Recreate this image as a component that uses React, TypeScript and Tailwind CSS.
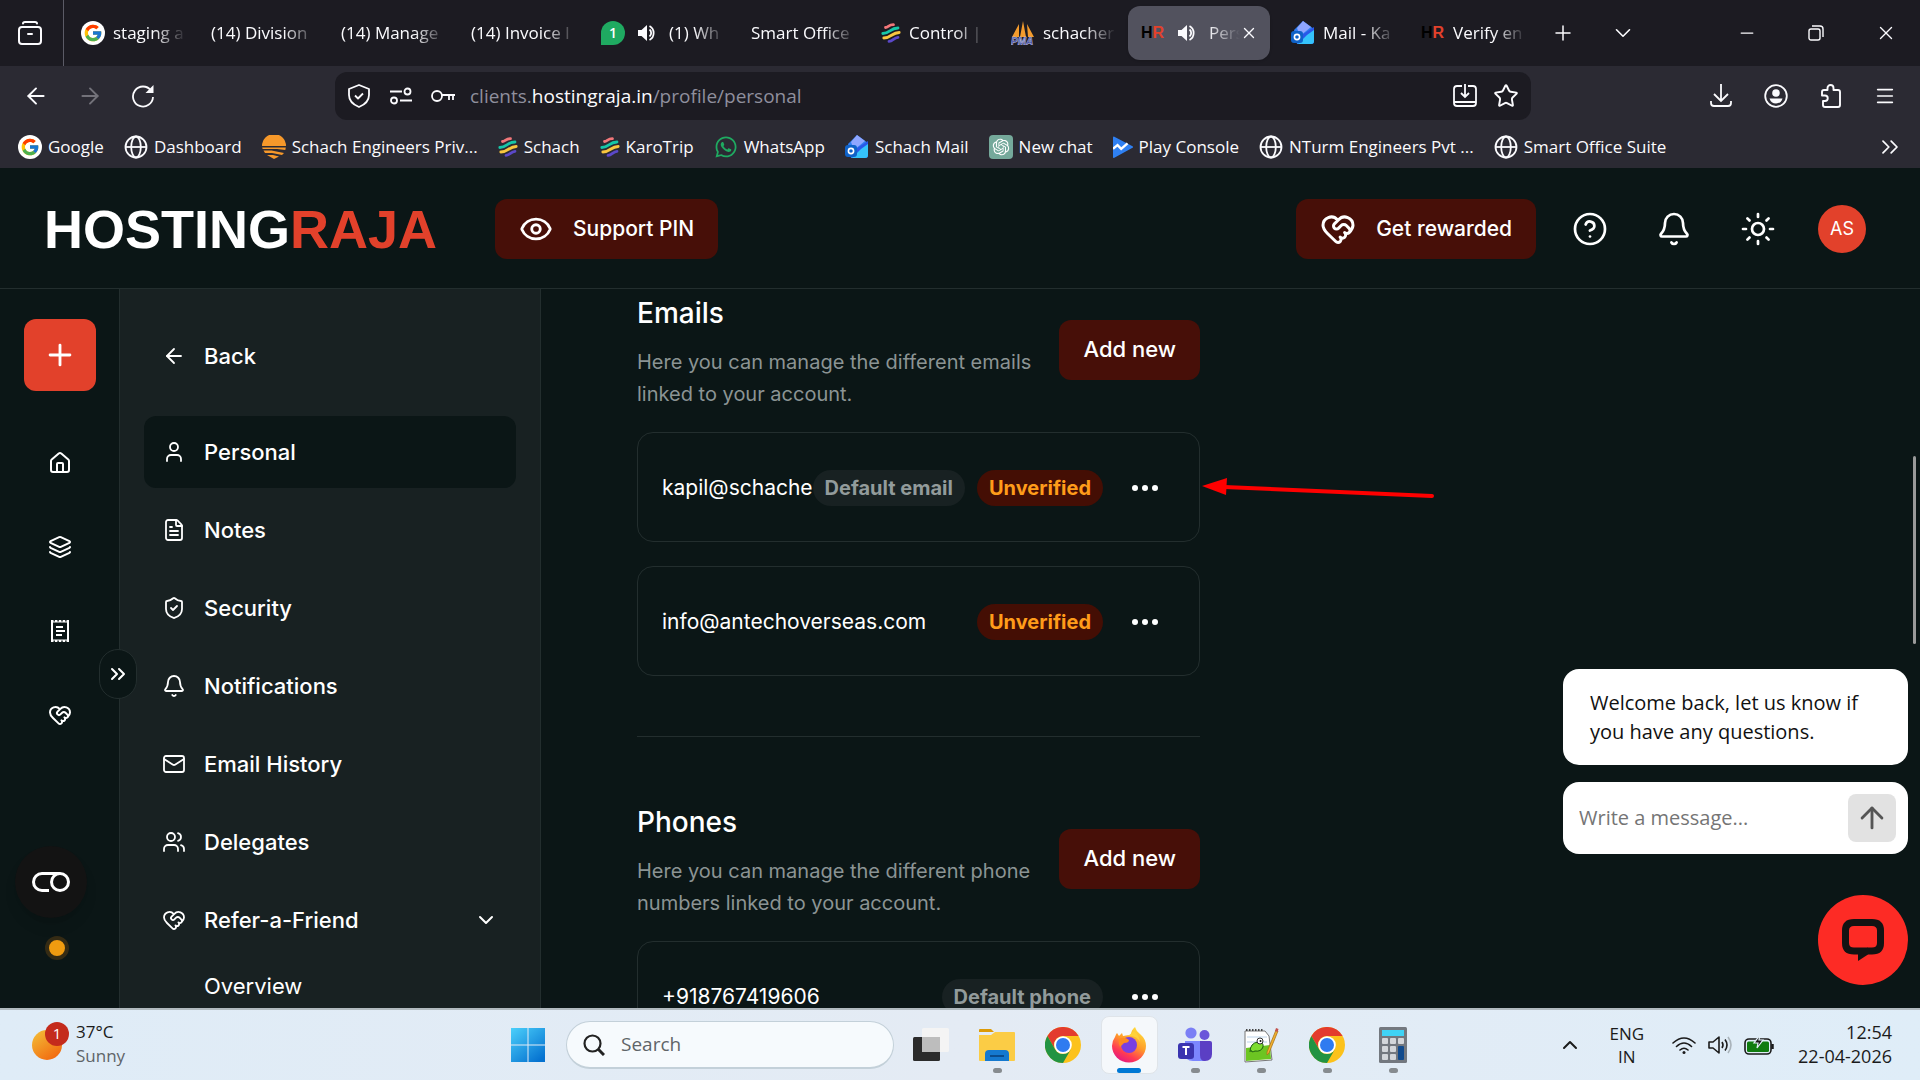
import type { ReactNode } from "react";
import {
  ArrowLeft, ArrowRight, ArrowUp, Bell, ChevronDown, ChevronsRight, ChevronUp, CircleQuestionMark, Eye,
  FileText, HeartHandshake, House, Layers, Mail, Menu, Minus, Plus, ShieldCheck, Star, Sun, User, Users, X,
} from "lucide-react";
import { FcGoogle } from "react-icons/fc";
import { FaWhatsapp } from "react-icons/fa";
import { RiOpenaiFill } from "react-icons/ri";

const GoogleIcon = () => (
  <span className="flex size-6 shrink-0 items-center justify-center rounded-full bg-white"><FcGoogle size={20} /></span>
);

const GlobeIcon = () => (
  <svg viewBox="0 0 24 24" className="size-6 shrink-0" fill="none" stroke="#fbfbfe" strokeWidth="1.8">
    <circle cx="12" cy="12" r="10.5" />
    <ellipse cx="12" cy="12" rx="4.8" ry="10.5" />
    <path d="M1.5 12h21" />
  </svg>
);

const WaveIcon = () => (
  <svg viewBox="0 0 20 20" className="size-5 shrink-0" fill="none" strokeWidth="2.8" strokeLinecap="round">
    <path d="M4.500 4.500C7 4.500 8 1.500 12.500 1.700" stroke="#f2777a" />
    <path d="M1.800 10.500C9 10.500 9 5 17 5" stroke="#16c7a8" />
    <path d="M2.800 15C10 15 11 9.500 18.200 9.500" stroke="#f9c73f" />
    <path d="M8 18.300C12 18 13 14.500 17 14.300" stroke="#5b48c9" />
  </svg>
);

const SunsetIcon = () => (
  <svg viewBox="0 0 24 24" className="size-6 shrink-0" fill="#f6982a">
    <path d="M0 11A12 12 0 0 1 24 11z" />
    <path d="M.2 12.500h23.600l-.5 2.500-8.300-1-14.400 0z" />
    <path d="M1.500 15.500h8l12.500 2.500-2 2-10-2-7 0zM5 20h6l6 1.500-5 2.500z" />
  </svg>
);

const OutlookIcon = () => (
  <svg viewBox="0 0 24 24" className="size-6 shrink-0">
    <path d="M3 9L12 0l11 8v12a3 3 0 0 1-3 3H6z" fill="#2f7df0" />
    <path d="M6 7L12 0l8 6L9 15z" fill="#8fa6ff" />
    <path d="M9 15L23 6v14a3 3 0 0 1-3 3H8z" fill="#2a57e8" />
    <path d="M23 9v11a3 3 0 0 1-3 3H7l9-9z" fill="#35c3fb" />
    <rect x="0" y="10" width="12" height="12" rx="3" fill="#0f62c8" />
    <circle cx="6" cy="16" r="2.600" fill="none" stroke="#fff" strokeWidth="1.600" />
  </svg>
);

const ChatGptIcon = () => (
  <span className="flex size-6 shrink-0 items-center justify-center rounded bg-[#75a99b]"><RiOpenaiFill size={20} color="#fff" /></span>
);

const PlayConsoleIcon = () => (
  <svg viewBox="0 0 22 24" className="h-6 w-5 shrink-0">
    <path d="M1 1.500L21 12 1 23z" fill="#2f80f2" stroke="#2f80f2" strokeWidth="2" strokeLinejoin="round" />
    <path d="M0 14l5-4 4 4 7-6" fill="none" stroke="#fff" strokeWidth="2.600" />
  </svg>
);

const PmaIcon = () => (
  <svg viewBox="0 0 24 24" className="size-6 shrink-0">
    <path d="M8 3v13H1zM12 0l3 16H9zM16 3l7 13h-6z" fill="#f39b2d" />
    <text x="0" y="24" fontSize="10" fontWeight="700" fontStyle="italic" fill="#33409a" stroke="#c9cdf0" strokeWidth="0.500" fontFamily="Liberation Sans, sans-serif">PMA</text>
  </svg>
);

const HrIcon = () => (
  <span className="w-6 shrink-0 font-['Liberation_Sans',sans-serif] text-base leading-6 font-bold text-black">H<span className="text-[#e2412b]">R</span></span>
);

const WhatsAppBadge = () => (
  <span className="flex size-6 shrink-0 items-center justify-center rounded-full rounded-bl-none bg-[#1faa61] text-sm font-semibold text-white">1</span>
);

const SpeakerIcon = () => (
  <svg viewBox="0 0 20 20" className="size-5 shrink-0" fill="#fbfbfe">
    <path d="M1 7h3.500L10 2v16l-5.500-5H1z" />
    <path d="M12.500 6.500a4.500 4.500 0 0 1 0 7M12.500 3a8 8 0 0 1 0 14" fill="none" stroke="#fbfbfe" strokeWidth="1.800" />
  </svg>
);

const TabsArchiveIcon = () => (
  <svg viewBox="0 0 24 24" className="size-6" fill="none" stroke="#fbfbfe" strokeWidth="2" strokeLinecap="round">
    <path d="M5 2.500Q5 1 7 1h10q2 0 2 1.500" />
    <rect x="1" y="6" width="22" height="17" rx="3" />
    <path d="M10 13h4" />
  </svg>
);

type Tab = { title: string; icon?: ReactNode; sound?: boolean; active?: boolean };

const tabs: Tab[] = [
  { title: "staging a", icon: <GoogleIcon /> },
  { title: "(14) Division" },
  { title: "(14) Manage" },
  { title: "(14) Invoice l" },
  { title: "(1) Wh", icon: <WhatsAppBadge />, sound: true },
  { title: "Smart Office" },
  { title: "Control |", icon: <WaveIcon /> },
  { title: "schacher", icon: <PmaIcon /> },
  { title: "Pers", icon: <HrIcon />, sound: true, active: true },
  { title: "Mail - Ka", icon: <OutlookIcon /> },
  { title: "Verify en", icon: <HrIcon /> },
];

const bookmarks = [
  { title: "Google", icon: <GoogleIcon /> },
  { title: "Dashboard", icon: <GlobeIcon /> },
  { title: "Schach Engineers Priv...", icon: <SunsetIcon /> },
  { title: "Schach", icon: <WaveIcon /> },
  { title: "KaroTrip", icon: <WaveIcon /> },
  { title: "WhatsApp", icon: <FaWhatsapp size={24} color="#1faa61" /> },
  { title: "Schach Mail", icon: <OutlookIcon /> },
  { title: "New chat", icon: <ChatGptIcon /> },
  { title: "Play Console", icon: <PlayConsoleIcon /> },
  { title: "NTurm Engineers Pvt ...", icon: <GlobeIcon /> },
  { title: "Smart Office Suite", icon: <GlobeIcon /> },
];

const menu = [
  { title: "Personal", icon: User, active: true },
  { title: "Notes", icon: FileText },
  { title: "Security", icon: ShieldCheck },
  { title: "Notifications", icon: Bell },
  { title: "Email History", icon: Mail },
  { title: "Delegates", icon: Users },
  { title: "Refer-a-Friend", icon: HeartHandshake, open: true },
];

function TabStrip() {
  return (
    <div className="flex h-[66px] shrink-0 items-center bg-[#1c1b22] text-[17px] text-[#fbfbfe]">
      <button type="button" aria-label="Recent browsing" className="flex h-full w-16 items-center justify-center border-r border-[#5b5b66] pr-1"><TabsArchiveIcon /></button>
      <div className="ml-1 flex h-full items-center">
        {tabs.map((tab) => (
          <div key={tab.title} className={tab.sound ? "w-[150px] shrink-0" : "w-[130px] shrink-0"}>
            <div className={`flex h-[54px] items-center gap-2 pl-[13px] ${tab.active ? "mr-2 rounded-xl bg-[#52525e] pr-3 shadow" : "pr-3"}`}>
              {tab.icon}
              {tab.sound && <span className="mx-1 flex"><SpeakerIcon /></span>}
              <span className="min-w-0 flex-1 overflow-hidden whitespace-nowrap [mask-image:linear-gradient(to_right,#000_calc(100%-32px),transparent)]">{tab.title}</span>
              {tab.active && <button type="button" aria-label="Close tab" className="-ml-2"><X size={18} strokeWidth={1.8} /></button>}
            </div>
          </div>
        ))}
      </div>
      <button type="button" aria-label="New tab" className="ml-3 flex w-[26px] justify-center"><Plus size={24} strokeWidth={1.5} /></button>
      <button type="button" aria-label="List all tabs" className="ml-[34px] flex w-7"><ChevronDown size={26} strokeWidth={1.5} /></button>
      <div className="ml-auto flex items-center pr-[22px]">
        <button type="button" aria-label="Minimize" className="flex w-[69px] justify-center"><Minus size={20} strokeWidth={1.5} /></button>
        <button type="button" aria-label="Restore" className="flex w-[69px] justify-center">
          <svg viewBox="0 0 16 16" className="size-4" fill="none" stroke="#fbfbfe" strokeWidth="1.400">
            <rect x="1" y="4" width="11" height="11" rx="2" />
            <path d="M4 1h8q3 0 3 3v8" />
          </svg>
        </button>
        <button type="button" aria-label="Close" className="ml-6 flex w-6 justify-center"><X size={22} strokeWidth={1.5} /></button>
      </div>
    </div>
  );
}

function AddressBar() {
  return (
    <div className="flex h-15 shrink-0 items-center bg-[#2b2a33] text-[#fbfbfe]">
      <div className="flex w-[335px] items-center gap-7 pl-[23px]">
        <button type="button" aria-label="Go back"><ArrowLeft size={26} strokeWidth={1.8} /></button>
        <button type="button" aria-label="Go forward" className="text-[#73727a]"><ArrowRight size={26} strokeWidth={1.8} /></button>
        <button type="button" aria-label="Reload">
          <svg viewBox="0 0 24 24" className="size-6" fill="none" stroke="currentColor" strokeWidth="1.800">
            <path d="M20 6.500A10 10 0 1 0 22 13" />
            <path d="M22.500 1v8h-8z" fill="currentColor" stroke="none" />
          </svg>
        </button>
      </div>
      <div className="flex h-12 min-w-0 max-w-[1196px] flex-1 items-center rounded-xl bg-[#1c1b22] pr-3 pl-3">
        <svg viewBox="0 0 24 24" className="size-6" fill="none" stroke="currentColor" strokeWidth="1.800" strokeLinejoin="round">
          <path d="M12 1l10 4v6q0 8-10 12Q2 19 2 11V5z" />
          <path d="M8 11.500l3 3 5-5" />
        </svg>
        <svg viewBox="0 0 22 18" className="ml-[19px] h-[18px] w-[22px]" fill="none" stroke="currentColor" strokeWidth="1.800">
          <path d="M0 4.500h12M10 13.500h12" />
          <circle cx="17.500" cy="4.500" r="3" />
          <circle cx="4" cy="13.500" r="3" />
        </svg>
        <svg viewBox="0 0 24 14" className="ml-[19px] h-3.5 w-6" fill="none" stroke="currentColor" strokeWidth="1.800">
          <circle cx="6" cy="7" r="5" />
          <path d="M11 6h13M18 6v5M22 6v5" />
        </svg>
        <div className="ml-[15px] flex-1 text-[19px] text-[#8f8f9d]">clients.<span className="text-[#fbfbfe]">hostingraja.in</span>/profile/personal</div>
        <svg viewBox="0 0 24 24" className="size-6" fill="none" stroke="currentColor" strokeWidth="1.800">
          <path d="M9 2H4q-3 0-3 3v14q0 3 3 3h16q3 0 3-3V5q0-3-3-3h-5M1 18h22M12 0v12M8 9l4 4 4-4" />
        </svg>
        <Star size={26} strokeWidth={1.8} className="ml-4" />
      </div>
      <div className="ml-auto flex items-center gap-[31px] pr-6">
        <svg viewBox="0 0 24 24" className="size-6" fill="none" stroke="currentColor" strokeWidth="1.800">
          <path d="M12 0v17M5 10l7 7 7-7M2 17v2q0 3 3 3h14q3 0 3-3v-2" />
        </svg>
        <svg viewBox="0 0 24 24" className="size-6">
          <circle cx="12" cy="12" r="10.800" fill="none" stroke="currentColor" strokeWidth="1.800" />
          <circle cx="12" cy="9" r="3.800" fill="currentColor" />
          <path d="M5.500 14.500h13q-1.500 5-6.500 5t-6.500-5z" fill="currentColor" />
        </svg>
        <svg viewBox="0 0 24 24" className="size-6" fill="none" stroke="currentColor" strokeWidth="1.900" strokeLinejoin="round">
          <path d="M8.500 6V4a3 3 0 0 1 6 0v2H19q2 0 2 2v13q0 2-2 2H6q-2 0-2-2v-4h2a2.500 2.500 0 0 0 0-5.500H3V8q0-2 2-2z" />
        </svg>
        <Menu size={22} strokeWidth={1.8} />
      </div>
    </div>
  );
}

function BookmarkBar() {
  return (
    <nav className="flex h-[42px] shrink-0 items-center bg-[#2b2a33] pr-4 pl-[18px] text-[17px] text-[#fbfbfe]">
      <div className="flex items-center gap-5">
        {bookmarks.map((item) => (
          <a key={item.title} href="#" className="flex items-center gap-1.5 whitespace-nowrap">{item.icon}{item.title}</a>
        ))}
      </div>
      <ChevronsRight size={28} strokeWidth={1.5} className="ml-auto" />
    </nav>
  );
}

function SiteHeader() {
  return (
    <header className="flex h-[121px] shrink-0 items-center border-b border-[#232e2e] pt-0.5 pr-[54px] pl-11">
      <a href="#" className="w-[451px] font-['Liberation_Sans',sans-serif] text-[54px] leading-none font-bold text-white">HOSTING<span className="text-[#e2412b]">RAJA</span></a>
      <button type="button" className="flex h-15 items-center gap-5 rounded-xl bg-[#470f08] px-6 text-[21px] font-medium text-white"><Eye size={34} />Support PIN</button>
      <button type="button" className="ml-auto flex h-15 items-center gap-5 rounded-xl bg-[#470f08] px-6 text-[21px] font-medium text-white"><HeartHandshake size={36} />Get rewarded</button>
      <button type="button" aria-label="Help" className="ml-9"><CircleQuestionMark size={36} strokeWidth={1.8} /></button>
      <button type="button" aria-label="Alerts" className="ml-12"><Bell size={36} strokeWidth={1.8} /></button>
      <button type="button" aria-label="Theme" className="ml-12"><Sun size={36} strokeWidth={1.8} /></button>
      <button type="button" className="ml-[42px] size-12 rounded-full bg-[#e2412b] text-lg text-white">AS</button>
    </header>
  );
}

function Rail() {
  return (
    <div className="relative flex w-[120px] shrink-0 flex-col items-center border-r border-[#232e2e] pt-[30px]">
      <button type="button" aria-label="Create" className="flex size-[72px] items-center justify-center rounded-xl bg-[#e2412b]"><Plus size={34} strokeWidth={2} /></button>
      <nav className="mt-15 flex flex-col gap-15">
        <a href="#" aria-label="Home"><House size={24} /></a>
        <a href="#" aria-label="Products"><Layers size={24} /></a>
        <a href="#" aria-label="Invoices">
          <svg viewBox="0 0 24 24" className="size-6" fill="none" stroke="currentColor" strokeWidth="2">
            <path d="M4 1v22M20 1v22" />
            <path d="M3 2h18M3 22h18" strokeDasharray="2.500 1.400" />
            <path d="M4 3h16M4 21h16" strokeWidth="1" />
            <path d="M8 8h7M8 12h9M8 16h6" />
          </svg>
        </a>
        <a href="#" aria-label="Rewards"><HeartHandshake size={24} /></a>
      </nav>
      <button type="button" aria-label="Expand menu" className="absolute top-[360px] -right-[18px] z-10 flex h-[50px] w-[38px] items-center justify-center rounded-full border border-[#232e2e] bg-[#0b1616]"><ChevronsRight size={24} /></button>
      <div className="absolute top-[557px] left-[15px] flex size-[72px] items-center justify-center rounded-full bg-[#131313] shadow-lg">
        <svg viewBox="0 0 38 20" className="h-5 w-[38px]" fill="none" stroke="#fff" strokeWidth="3">
          <path d="M17 18.500h-7a8.500 8.500 0 0 1 0-17h18" />
          <circle cx="28" cy="10" r="8.500" />
        </svg>
      </div>
      <div className="absolute top-[647px] left-[45px] size-6 rounded-full border-4 border-[#352b14] bg-[#ef9b10]" />
    </div>
  );
}

function SideMenu() {
  return (
    <aside className="w-[421px] shrink-0 border-r border-[#232e2e] bg-[#182122] px-6 text-[22px] font-medium">
      <a href="#" className="mt-[31px] flex h-[72px] items-center gap-[18px] pl-[18px]"><ArrowLeft size={24} strokeWidth={1.8} />Back</a>
      <nav className="mt-6 flex flex-col gap-1.5">
        {menu.map((item) => (
          <a key={item.title} href="#" className={`flex h-[72px] items-center gap-[18px] rounded-xl px-[18px] ${item.active ? "bg-[#0b1616]" : ""}`}>
            <item.icon size={24} strokeWidth={1.8} />
            {item.title}
            {item.open && <ChevronDown size={24} className="ml-auto" />}
          </a>
        ))}
        <a href="#" className="pl-15 leading-12 font-normal">Overview</a>
      </nav>
    </aside>
  );
}

const Badge = ({ children, warn }: { children: ReactNode; warn?: boolean }) => (
  <span className={`shrink-0 rounded-full px-3 text-xl leading-9 font-bold ${warn ? "bg-[#440e04] text-[#ff9c1a]" : "bg-[#182122] text-[#929b9b]"}`}>{children}</span>
);

function ContactCard({ value, badge, unverified }: { value: string; badge?: string; unverified?: boolean }) {
  return (
    <div className="flex h-[110px] items-center rounded-2xl border border-[#232e2e] px-6 pt-0.5 text-[21px]">
      <span className="min-w-0 flex-1 overflow-hidden whitespace-nowrap">{value}</span>
      <div className="flex gap-3">
        {badge && <Badge>{badge}</Badge>}
        {unverified && <Badge warn>Unverified</Badge>}
      </div>
      <button type="button" aria-label="More" className="ml-3 flex h-15 w-15 items-center justify-center">
        <svg viewBox="0 0 26 8" className="h-2 w-[26px]" fill="#fff"><circle cx="3" cy="4" r="3" /><circle cx="13" cy="4" r="3" /><circle cx="23" cy="4" r="3" /></svg>
      </button>
    </div>
  );
}

function Section({ title, text, children }: { title: string; text: string; children: ReactNode }) {
  return (
    <section>
      <div className="flex items-center justify-between gap-6">
        <div className="min-w-0 flex-1">
          <h2 className="text-[28px] leading-12 font-medium">{title}</h2>
          <p className="mt-[9px] text-xl leading-8 text-[#8b9494]">{text}</p>
        </div>
        <button type="button" className="h-15 shrink-0 rounded-xl bg-[#470f08] px-6 text-[22px] font-medium text-white">Add new</button>
      </div>
      <div className="mt-[22px] flex flex-col gap-6">{children}</div>
    </section>
  );
}

function ChatWidget() {
  return (
    <div className="absolute right-3 bottom-[23px] flex w-[345px] flex-col items-end font-['Open_Sans',sans-serif]">
      <p className="w-full rounded-2xl bg-white px-[27px] py-[19px] text-xl leading-[29px] text-[#111]">Welcome back, let us know if you have any questions.</p>
      <div className="mt-[17px] flex h-[72px] w-full items-center rounded-2xl bg-white pr-3 pl-4">
        <input aria-label="Message" placeholder="Write a message..." className="min-w-0 flex-1 text-xl text-[#111] outline-none placeholder:text-[#757575]" />
        <button type="button" aria-label="Send" className="flex size-12 items-center justify-center rounded-lg bg-[#e2e2e2] text-[#555]"><ArrowUp size={34} strokeWidth={2} /></button>
      </div>
      <button type="button" aria-label="Open chat" className="mt-[41px] flex size-[90px] items-center justify-center rounded-full bg-[#fd2b25]">
        <svg viewBox="0 0 42 42" className="size-[42px]" fill="none" stroke="#131313" strokeWidth="7">
          <path d="M16 32h-4q-8.500 0-8.500-8V11.500q0-8 8.500-8h18q8.500 0 8.500 8V24q0 8-8.500 8h-4.500" />
          <path d="M16 28.500v13.500l10-6.500 0-7z" fill="#131313" stroke="none" />
        </svg>
      </button>
    </div>
  );
}

const ChromeIcon = () => (
  <svg viewBox="0 0 36 36" className="size-9">
    <circle cx="18" cy="18" r="18" fill="#fcc21b" />
    <path d="M2.400 9A18 18 0 0 1 33.600 9H18a9 9 0 0 0-7.800 13.500z" fill="#e33b2e" />
    <path d="M2.400 9A18 18 0 0 0 18 36l7.800-13.500a9 9 0 0 1-15.600 0z" fill="#229342" />
    <circle cx="18" cy="18" r="8.800" fill="#fff" />
    <circle cx="18" cy="18" r="7" fill="#2f7bf0" />
  </svg>
);

const FolderIcon = () => (
  <svg viewBox="0 0 36 36" className="size-9">
    <path d="M0 3q0-1 1-1h11l3 3H0z" fill="#dd9a07" />
    <path d="M0 8h12l4-3h19q1 0 1 1v27q0 1-1 1H1q-1 0-1-1z" fill="#fbcc45" />
    <path d="M6 34V27q0-4 4-4h16q4 0 4 4v7z" fill="#1579cf" />
    <path d="M11 29h14" stroke="#0b4c8c" strokeWidth="2" />
  </svg>
);

const FirefoxIcon = () => (
  <svg viewBox="0 0 36 36" className="size-9">
    <defs>
      <linearGradient id="fox" x1="0.800" y1="0" x2="0.250" y2="1">
        <stop offset="0" stopColor="#ffe43d" /><stop offset="0.450" stopColor="#ff9a2a" />
        <stop offset="0.750" stopColor="#ff3a52" /><stop offset="1" stopColor="#e01587" />
      </linearGradient>
    </defs>
    <path d="M4 10q1-3 2-4l2 3 3-3 1 3q5-1 8-1 0-5 4-8 1 4 5 7 6 5 6 12a17 16.500 0 0 1-34 0q0-5 3-9z" fill="url(#fox)" />
    <circle cx="18" cy="18" r="8" fill="#7a3fe0" />
    <path d="M17 9q9-1 12 6-1-7-6-11" fill="#ffd23a" />
    <path d="M8 12q5-3 10 1 0 3-5 3-2 2-4 4-2-4-1-8z" fill="#ff8a1f" />
  </svg>
);

const TeamsIcon = () => (
  <svg viewBox="0 0 36 36" className="size-9">
    <circle cx="14" cy="6" r="5.600" fill="#7b7ff5" />
    <circle cx="27.500" cy="8" r="5" fill="#6a55d9" />
    <path d="M20 14h13q2 0 2 2v11q0 7-7 7h-8z" fill="#5b3fc4" />
    <path d="M8 14h15v14q0 6 5 6H16q-8 0-8-7z" fill="#7b86ff" />
    <rect x="1" y="16" width="16" height="16" rx="3" fill="#3a34b0" />
    <path d="M5.500 20h7M9 20v8" stroke="#fff" strokeWidth="2" />
  </svg>
);

const NotepadIcon = () => (
  <svg viewBox="0 0 36 36" className="size-9">
    <path d="M2 4h20l4 5 3 24-27 2z" fill="#fff" stroke="#777" strokeWidth="1" />
    <path d="M3 21l24-3 1 14-25 2z" fill="#6cc522" />
    <path d="M3 3h18" stroke="#444" strokeWidth="2" strokeDasharray="1.500 1.500" />
    <path d="M4 10h20M4 15h20" stroke="#bcd3ea" />
    <path d="M7 25q0-9 8-10 6 0 5 5-2 5-8 4-4 2-4-1" fill="#7ddc2e" stroke="#1c5c10" />
    <circle cx="17" cy="14" r="3" fill="#fff" stroke="#333" /><circle cx="17.500" cy="14" r="1" fill="#111" />
    <path d="M33 3l2 1-9 22-2 2 0-3z" fill="#f3b12e" stroke="#a8731a" strokeWidth="0.800" />
    <path d="M33 1l2.500 1-1 3-2.500-1z" fill="#c2524d" />
  </svg>
);

const CalculatorIcon = () => (
  <svg viewBox="0 0 36 36" className="size-9">
    <rect x="4" width="28" height="36" rx="1.500" fill="#73787f" />
    <rect x="7" y="3" width="22" height="6" fill="#3fd3f5" />
    {[11, 19, 27].map((y) => [7, 15, 23].map((x) => (x === 23 && y > 11 ? null : <rect key={`${x}-${y}`} x={x} y={y} width="6" height="6" rx="1" fill="#d3d6da" />)))}
    <rect x="23" y="19" width="6" height="14" rx="1" fill="#114a8c" />
  </svg>
);

const TaskViewIcon = () => (
  <svg viewBox="0 0 36 36" className="size-9">
    <rect x="0" y="10" width="27" height="24" rx="1.500" fill="#2b2b2b" />
    <rect x="9" y="1" width="27" height="24" rx="1.500" fill="#f4f4f4" />
    <path d="M9 10h18v15H9z" fill="#bdbdbd" />
  </svg>
);

const WindowsIcon = () => (
  <svg viewBox="0 0 36 36" className="size-9">
    <defs>
      <linearGradient id="win" x1="0" y1="0" x2="0.800" y2="1"><stop offset="0" stopColor="#4bd0fb" /><stop offset="1" stopColor="#0572d0" /></linearGradient>
    </defs>
    <path d="M1 1h16.500v16.500H1zM18.500 1H35v16.500H18.500zM1 18.500h16.500V35H1zM18.500 18.500H35V35H18.500z" fill="url(#win)" />
  </svg>
);

const apps = [
  { name: "Task View", icon: <TaskViewIcon /> },
  { name: "File Explorer", icon: <FolderIcon />, running: true },
  { name: "Chrome", icon: <ChromeIcon /> },
  { name: "Firefox", icon: <FirefoxIcon />, focused: true },
  { name: "Teams", icon: <TeamsIcon />, running: true },
  { name: "Notepad++", icon: <NotepadIcon />, running: true },
  { name: "Chrome profile", icon: <ChromeIcon />, running: true },
  { name: "Calculator", icon: <CalculatorIcon />, running: true },
];

function Taskbar() {
  return (
    <footer className="relative flex h-[72px] shrink-0 items-center border-t-2 border-[#b1babf] bg-linear-to-r from-[#dfecf7] via-[#e4ebf4] to-[#dfedf8] font-['Open_Sans',sans-serif] text-[17px] text-[#1b1b1b]">
      <button type="button" className="flex w-[510px] items-center gap-1 pb-0.5 pl-8 text-left">
        <svg viewBox="0 0 40 44" className="h-11 w-10">
          <defs><linearGradient id="sun" x1="0" y1="0" x2="0.700" y2="1"><stop offset="0" stopColor="#f3c23a" /><stop offset="1" stopColor="#f26a0f" /></linearGradient></defs>
          <circle cx="15" cy="23" r="15" fill="url(#sun)" />
          <circle cx="25" cy="12" r="12" fill="#c42b1c" />
          <text x="25" y="17" fontSize="15" textAnchor="middle" fill="#fff">1</text>
        </svg>
        <span className="leading-6">37°C<br /><span className="text-[#5e6468]">Sunny</span></span>
      </button>
      <button type="button" aria-label="Start"><WindowsIcon /></button>
      <label className="ml-5 flex h-12 w-[328px] items-center rounded-full border border-b-2 border-[#c3d0d9] bg-[#f6fafd] pl-4">
        <svg viewBox="0 0 22 22" className="size-[22px]" fill="none" stroke="#222" strokeWidth="2.200">
          <circle cx="9.500" cy="9.500" r="8" /><path d="M15.500 15.500l5.500 5.500" strokeWidth="3" />
        </svg>
        <input aria-label="Search" placeholder="Search" className="ml-4 min-w-0 flex-1 text-[19px] outline-none placeholder:text-[#5f6468]" />
      </label>
      <div className="ml-1 flex h-full items-center">
        {apps.map((app) => (
          <button key={app.name} type="button" aria-label={app.name} className="relative flex h-full w-[66px] items-center justify-center">
            <span className={`flex h-[58px] w-[57px] items-center justify-center rounded-lg ${app.focused ? "border border-[#dfe4e9] bg-[#f5f8fb]" : ""}`}>{app.icon}</span>
            {app.running && <span className="absolute bottom-[7px] h-[5px] w-[9px] rounded-full bg-[#868b8f]" />}
            {app.focused && <span className="absolute bottom-[7px] h-[5px] w-6 rounded-full bg-[#0078d4]" />}
          </button>
        ))}
      </div>
      <div className="ml-auto flex items-center pr-7">
        <ChevronUp size={24} strokeWidth={2} />
        <span className="ml-[27px] text-center leading-[23px]">ENG<br />IN</span>
        <svg viewBox="0 0 24 20" className="ml-7 h-5 w-6" fill="none" stroke="#1b1b1b" strokeWidth="1.600" strokeLinecap="round">
          <path d="M1 8q11-10 22 0M4.500 11.500q7.500-7 15 0M8 15q4-3.500 8 0" /><circle cx="12" cy="17.500" r="1.500" fill="#1b1b1b" stroke="none" />
        </svg>
        <svg viewBox="0 0 24 20" className="ml-3 h-5 w-6" fill="none" stroke="#1b1b1b" strokeWidth="1.600" strokeLinejoin="round">
          <path d="M1 7h4l6-5v16l-6-5H1zM14 7q2 3 0 6M17 4.500q4 5.500 0 11" /><path d="M20 2q6 8 0 16" stroke="#a9b3ba" />
        </svg>
        <svg viewBox="0 0 30 20" className="ml-3 h-5 w-[30px]">
          <rect x="1" y="4" width="26" height="15" rx="4" fill="none" stroke="#1b1b1b" strokeWidth="1.600" />
          <rect x="3" y="6.500" width="22" height="10.500" rx="1.500" fill="#107c10" />
          <path d="M28.500 9v5" stroke="#1b1b1b" strokeWidth="2.500" />
          <path d="M16 0l-6 8h4l-1 5 6-8h-4z" fill="#1b1b1b" stroke="#e3f0f9" strokeWidth="1.200" />
        </svg>
        <span className="ml-6 pb-0.5 text-right text-lg leading-6">12:54<br />22-04-2026</span>
      </div>
    </footer>
  );
}

export default function App() {
  return (
    <div className="flex h-screen flex-col overflow-hidden bg-[#0b1616] font-['Open_Sans',sans-serif]">
      <TabStrip />
      <AddressBar />
      <BookmarkBar />
      <div className="relative flex min-h-0 flex-1 flex-col font-['Inter',sans-serif] text-white">
        <SiteHeader />
        <div className="flex min-h-0 flex-1 overflow-hidden">
          <Rail />
          <SideMenu />
          <main className="min-w-0 flex-1 pl-24">
            <div className="relative max-w-[563px]">
              <Section title="Emails" text="Here you can manage the different emails linked to your account.">
                <ContactCard value="kapil@schache" badge="Default email" unverified />
                <ContactCard value="info@antechoverseas.com" unverified />
              </Section>
              <hr className="mt-15 mb-[61px] border-[#232e2e]" />
              <Section title="Phones" text="Here you can manage the different phone numbers linked to your account.">
                <ContactCard value="+918767419606" badge="Default phone" />
              </Section>
              {/* pointer to the default address */}
              <svg viewBox="0 0 232 24" className="absolute top-[187px] left-full ml-0.5 h-6 w-[232px]">
                <path d="M22 11l208 9" stroke="#fe0000" strokeWidth="4" strokeLinecap="round" />
                <path d="M0 10L25 2l-1 17z" fill="#fe0000" />
              </svg>
            </div>
          </main>
        </div>
        <ChatWidget />
        <div className="absolute top-[288px] right-1 h-[188px] w-[3px] rounded-full bg-[#9a9a9a]" />
      </div>
      <Taskbar />
    </div>
  );
}
